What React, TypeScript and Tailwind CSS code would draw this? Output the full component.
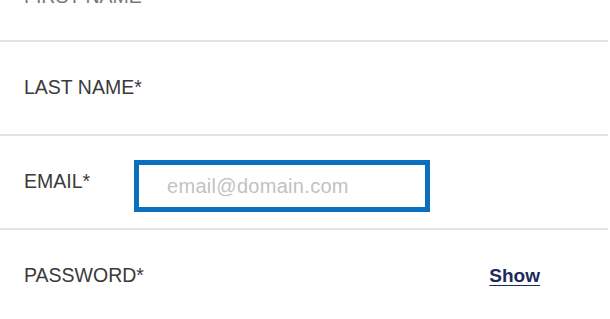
import { useState } from 'react';

const font = { fontFamily: '"Liberation Sans", Arial, sans-serif' };

function Row({ children }: { children: React.ReactNode }) {
  return (
    <div className="mr-[2px] flex h-[94px] items-center border-b-2 border-[#e2e2e2] px-6">{children}</div>
  );
}

export default function App() {
  const [show, setShow] = useState(false);
  return (
    <div className="min-h-screen overflow-hidden bg-white text-[19.5px] text-[#3a3a3a]" style={font}>
      <div className="mt-[-52px]">
        <Row>
          <span className="mt-[5px] text-[#777]">FIRST NAME*</span>
        </Row>
        <Row>
          <span>LAST NAME*</span>
        </Row>
        <Row>
          <span className="w-[110px] shrink-0">EMAIL*</span>
          <input
            type="email"
            placeholder="email@domain.com"
            className="mt-2 h-[52px] w-[296px] border-[5px] border-[#0a6fbc] bg-white pl-[28px] text-[20px] tracking-[0.3px] text-[#333] outline-none placeholder:text-[#c2c2c2]"
          />
        </Row>
        <Row>
          <span>PASSWORD*</span>
          <button
            onClick={() => setShow(!show)}
            className="ml-auto mr-[44px] text-[19px] font-bold text-[#1c2a5c] underline underline-offset-[3px]"
          >
            Show
          </button>
        </Row>
      </div>
    </div>
  );
}
